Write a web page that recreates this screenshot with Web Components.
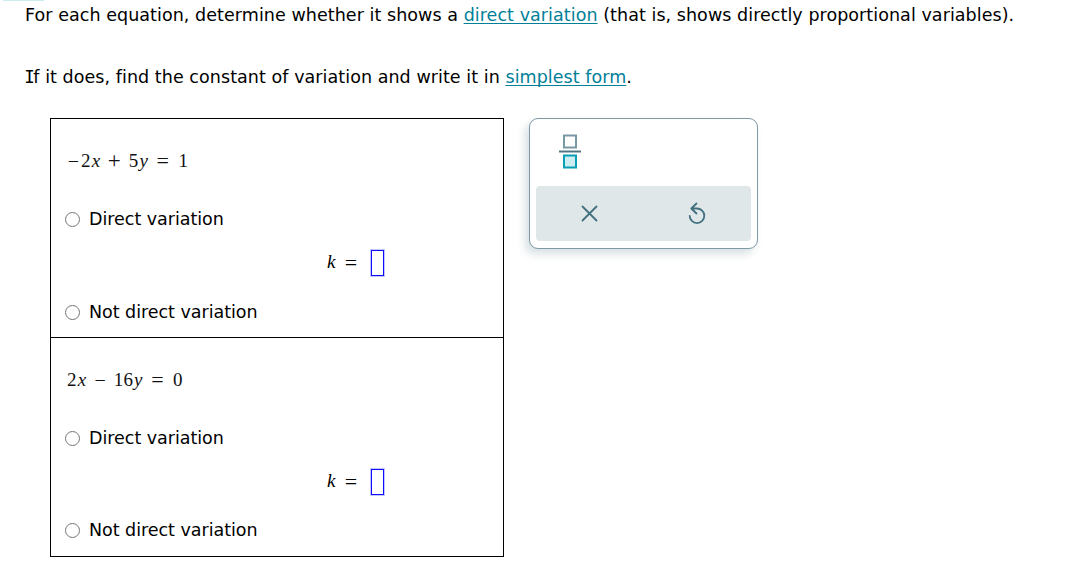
<!DOCTYPE html>
<html lang="en">
<head>
<meta charset="utf-8">
<title>Direct variation</title>
<style>
  body {
    margin: 0;
    background: #fff;
    color: #000;
    font-family: Verdana, "DejaVu Sans", sans-serif;
    font-size: 17.5px;
    overflow: hidden;
  }
</style>
</head>
<body>
<exercise-page>
  <question-text slot="question">
    <p>For each equation, determine whether it shows a <a href="#">direct variation</a> (that is, shows directly proportional variables).</p>
    <p><span>I</span>f it does, find the constant of variation and write it in <a href="#">simplest form</a>.</p>
  </question-text>
  <answer-table>
    <variation-choice name="first">
      <math-line slot="equation"><b class="neg">−</b>2<i>x</i><b class="plus">+</b>5<i>y</i><b class="eq">=</b>1</math-line>
    </variation-choice>
    <variation-choice name="second">
      <math-line slot="equation">2<i>x</i><b>−</b>16<i>y</i><b class="eq">=</b>0</math-line>
    </variation-choice>
  </answer-table>
  <math-keypad></math-keypad>
</exercise-page>

<script>
class ExercisePage extends HTMLElement {
  constructor() {
    super();
    this.attachShadow({ mode: "open" });
    this.shadowRoot.innerHTML = `
      <style>
        :host {
          display: block;
          height: 568px;
          overflow: hidden;
        }
        .tab {
          width: 41px;
          height: 1px;
          margin-left: 3px;
          background: #c9eef2;
        }
        .work {
          display: flex;
          align-items: flex-start;
          gap: 25px;
          padding: 26px 0 0 50px;
        }
      </style>
      <div class="tab"></div>
      <slot name="question"></slot>
      <div class="work"><slot></slot></div>
    `;
  }
}

class QuestionText extends HTMLElement {
  constructor() {
    super();
    this.attachShadow({ mode: "open" });
    this.shadowRoot.innerHTML = `
      <style>
        :host {
          display: grid;
          gap: 31px;
          padding-left: 25px;
          line-height: 31px;
          height: 92px;
          margin-top: -1px;
          white-space: nowrap;
          letter-spacing: 0.058px;
        }
        ::slotted(p) {
          margin: 0;
          height: 31px;
        }
      </style>
      <slot></slot>
    `;
  }

  connectedCallback() {
    this.querySelectorAll("a").forEach((link) => {
      link.style.color = "#007f99";
      link.style.textDecorationThickness = "1px";
      link.style.textUnderlineOffset = "2px";
      link.style.textDecorationSkipInk = "none";
    });
    // capital I with serifs
    this.querySelectorAll("span").forEach((cap) => {
      cap.style.fontFamily = '"DejaVu Sans Mono", monospace';
      cap.style.lineHeight = "1";
      cap.style.margin = "0 -1.5px 0 -0.8px";
    });
  }
}

class AnswerTable extends HTMLElement {
  constructor() {
    super();
    this.attachShadow({ mode: "open" });
    this.shadowRoot.innerHTML = `
      <style>
        :host {
          display: grid;
          grid-template-rows: 218px 218px;
          gap: 1px;
          width: 452px;
          border: 1px solid #000;
          background: #000;
        }
      </style>
      <slot></slot>
    `;
  }
}

class MathLine extends HTMLElement {
  constructor() {
    super();
    this.attachShadow({ mode: "open" });
    this.shadowRoot.innerHTML = `
      <style>
        :host {
          display: flex;
          align-items: center;
          height: 32px;
          font: 19px "Times New Roman", "Liberation Serif", serif;
          letter-spacing: 0.2px;
          color: #111;
        }
        ::slotted(i) {
          width: 10px;
          margin-left: 1px;
        }
        ::slotted(b) {
          width: 13px;
          margin: 0 7px 0 6px;
          font-weight: normal;
          font-size: 20px;
          text-align: center;
        }
        ::slotted(b.neg) {
          margin: 0 1px 0 0;
        }
        ::slotted(b.plus) {
          margin-right: 8px;
          font-size: 23px;
          line-height: 20px;
        }
        ::slotted(b.eq) {
          margin: 0 9px 0 7px;
          font-size: 22px;
          line-height: 20px;
        }
      </style>
      <slot></slot>
    `;
  }
}

class RadioOption extends HTMLElement {
  constructor() {
    super();
    this.attachShadow({ mode: "open" });
    this.shadowRoot.innerHTML = `
      <style>
        :host { display: block; }
        label {
          display: flex;
          align-items: center;
          gap: 9px;
          height: 32px;
          padding-left: 14px;
          letter-spacing: -0.03px;
        }
        input {
          appearance: none;
          box-sizing: border-box;
          width: 15px;
          height: 15px;
          margin: 1px 0 0;
          border: 1px solid #767676;
          border-radius: 50%;
        }
      </style>
      <label><input type="radio" name="${this.getAttribute("name")}"><slot></slot></label>
    `;
  }
}

class VariationChoice extends HTMLElement {
  constructor() {
    super();
    this.attachShadow({ mode: "open" });
    this.shadowRoot.innerHTML = `
      <style>
        :host {
          display: block;
          background: #fff;
        }
        .equation {
          padding: 26px 0 26px 16px;
        }
        .constant {
          display: flex;
          align-items: center;
          height: 36px;
          margin: 10px 0 15px;
          padding-left: 276px;
          font: 19px "Times New Roman", "Liberation Serif", serif;
        }
        :host([name="second"]) .constant { margin-bottom: 14px; }
        .constant i {
          width: 16px;
          margin-top: -2px;
        }
        .constant b {
          width: 16px;
          font-weight: normal;
          font-size: 22px;
          line-height: 20px;
          text-align: center;
        }
        .field {
          box-sizing: border-box;
          width: 13px;
          height: 26px;
          margin-left: 12px;
          border: 1px solid #0c0cff;
          box-shadow: 0 0 0 1px #c4c4ff;
        }
      </style>
      <div class="equation"><slot name="equation"></slot></div>
      <radio-option name="answer">Direct variation</radio-option>
      <div class="constant"><i>k</i><b>=</b><span class="field"></span></div>
      <radio-option name="answer">Not direct variation</radio-option>
    `;
  }
}

class MathKeypad extends HTMLElement {
  constructor() {
    super();
    this.attachShadow({ mode: "open" });
    this.shadowRoot.innerHTML = `
      <style>
        :host {
          display: block;
          box-sizing: border-box;
          width: 229px;
          height: 131px;
          padding: 0 6px;
          border: 1px solid #7d9aa5;
          border-radius: 9px;
          background: #fff;
          box-shadow: -4px 5px 8px rgba(60, 100, 115, 0.2);
        }
        svg { display: block; }
        .symbols {
          height: 52px;
          padding: 15px 0 0 23px;
        }
        .actions {
          display: grid;
          grid-template-columns: 1fr 1fr;
          place-items: center;
          height: 55px;
          border-radius: 4px;
          background: #dfe7e9;
        }
      </style>
      <div class="symbols">
        <svg width="22" height="36" viewBox="0 0 22 36">
          <rect x="5" y="1.5" width="12" height="12" fill="#fff" stroke="#7898a3" stroke-width="2"/>
          <path d="M0 17.5h22" stroke="#a9bdc4" stroke-width="3"/>
          <path d="M0 17.5h22" stroke="#527482" stroke-width="1"/>
          <rect x="5" y="21.5" width="12" height="12" fill="#ccedf1" stroke="#099eb5" stroke-width="2"/>
        </svg>
      </div>
      <div class="actions">
        <svg width="22" height="22" viewBox="0 0 22 22" fill="none" stroke="#41707f" stroke-width="1.8" stroke-linecap="round">
          <path d="M3.5 3.5l14 14M17.5 3.5L3.5 17.5"/>
        </svg>
        <svg width="22" height="24" viewBox="0 0 22 24" fill="none" stroke="#41707f" stroke-width="1.8" stroke-linecap="round" stroke-linejoin="round">
          <path d="M10.5 1.5L5.3 6.5l5.2 5M5.3 6.5H11a7.3 7.3 0 1 1-7.3 7.3"/>
        </svg>
      </div>
    `;
  }
}

customElements.define("exercise-page", ExercisePage);
customElements.define("question-text", QuestionText);
customElements.define("answer-table", AnswerTable);
customElements.define("math-line", MathLine);
customElements.define("radio-option", RadioOption);
customElements.define("variation-choice", VariationChoice);
customElements.define("math-keypad", MathKeypad);
</script>
</body>
</html>
